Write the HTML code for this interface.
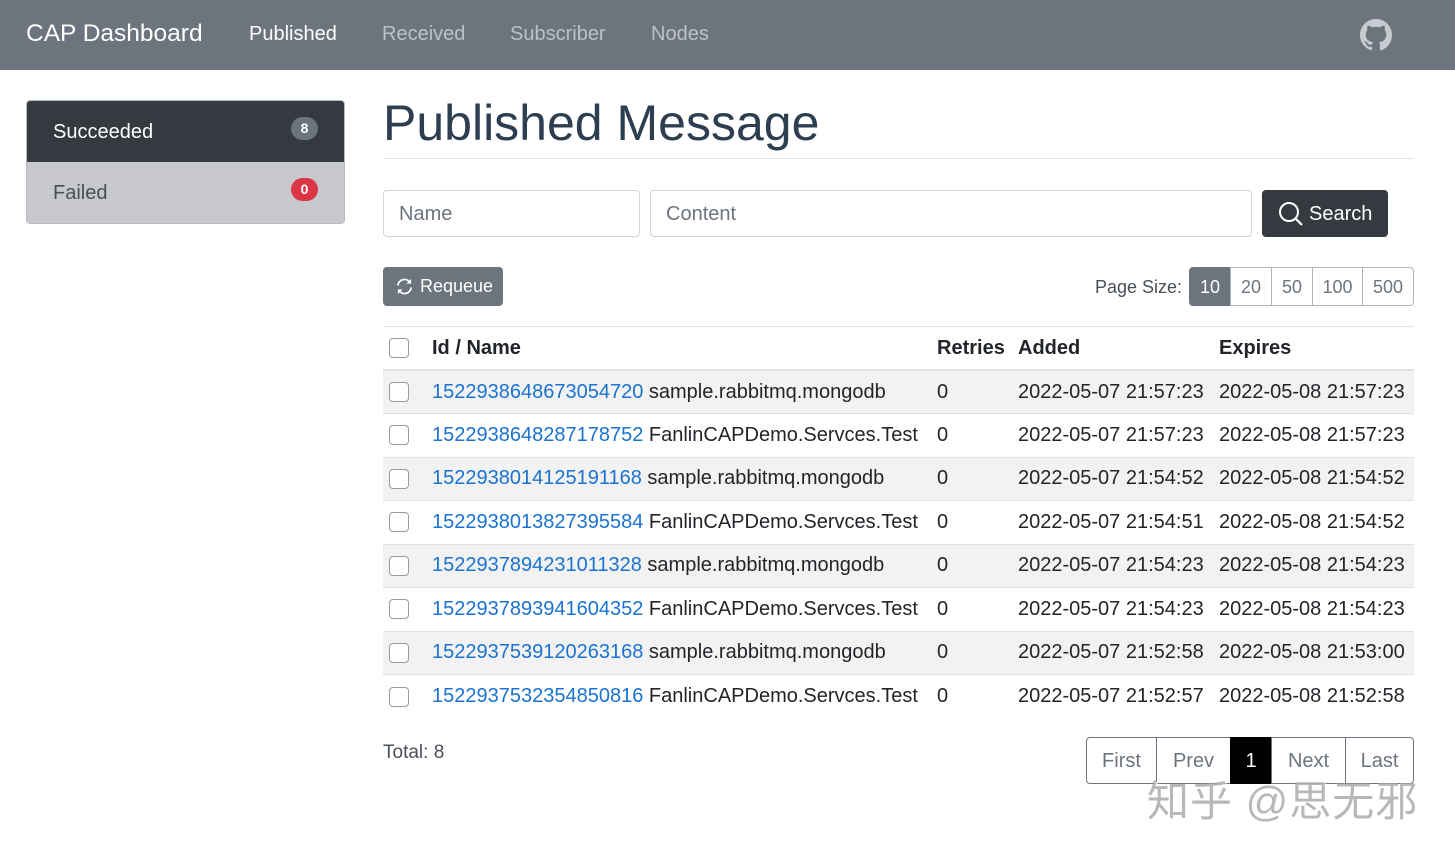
<!DOCTYPE html>
<html><head><meta charset="utf-8"><style>
*{box-sizing:border-box;margin:0;padding:0}
body{width:1455px;height:853px;background:#fff;font-family:"Liberation Sans",Arial,sans-serif;color:#212529;position:relative;overflow:hidden}
.nav{position:absolute;left:0;top:0;width:1455px;height:70px;background:#6c757d}
.nav span{position:absolute;top:23px;font-size:20px;color:rgba(255,255,255,.55)}
.abs{position:absolute}
.side{position:absolute;left:26px;top:100px;width:319px;height:124px;border:1px solid #b8bcc1;border-radius:4px;overflow:hidden}
.side div{height:61px;position:relative;font-size:20px;padding:20px 26px}
.badge{position:absolute;right:26px;top:16px;width:27px;height:23px;border-radius:12px;color:#fff;font-size:14px;font-weight:bold;text-align:center;line-height:23px}
.inp{position:absolute;top:190px;height:47px;border:1px solid #ced4da;border-radius:4px;font-size:20px;color:#6c757d;padding:12px 15px}
table{position:absolute;left:383px;top:326px;width:1031px;border-collapse:collapse;font-size:20px}
td,th{height:43.5px;border-top:1px solid #dee2e6;padding:0;white-space:nowrap;vertical-align:middle}
th{text-align:left;font-weight:bold;border-bottom:2px solid #dee2e6}
tbody tr:nth-child(odd){background:#f2f2f2}
.cb{display:inline-block;width:20px;height:20px;border:1px solid #9a9a9a;border-radius:4px;background:#fff;margin-left:6px;vertical-align:middle}
a{color:#1a73d0;text-decoration:none}
.ps{position:absolute;top:267px;height:39px;border:1px solid #adb5bd;font-size:18px;color:#6c757d;text-align:center;line-height:38px}
.pg{position:absolute;top:737px;height:47px;border:1px solid #6c757d;font-size:20px;color:#6c757d;text-align:center;line-height:46px}
</style></head><body>
<div class="nav">
<span style="left:26px;top:20px;font-size:24.5px;color:#fff">CAP Dashboard</span>
<span style="left:249px;color:#fff">Published</span>
<span style="left:382px">Received</span>
<span style="left:510px">Subscriber</span>
<span style="left:651px">Nodes</span>
<svg class="abs" style="left:1360px;top:19px" width="32" height="32" viewBox="0 0 16 16"><path fill="#c8ccd0" d="M8 0C3.580 0 0 3.58 0 8c0 3.54 2.29 6.530 5.47 7.59.4.07.55-.17.55-.38v-1.33c-2.23.48-2.7-1.07-2.7-1.07-.36-.92-.89-1.170-.89-1.17-.73-.5.06-.49.06-.49.8.06 1.23.83 1.23.83.72 1.22 1.87.87 2.33.67.07-.52.28-.87.5-1.07-1.78-.2-3.64-.89-3.64-3.95 0-.87.31-1.59.82-2.15-.08-.2-.36-1.02.08-2.12 0 0 .67-.21 2.2.82a7.6 7.6 0 014 0c1.53-1.04 2.2-.82 2.2-.82.44 1.1.16 1.92.08 2.12.51.56.82 1.27.82 2.15 0 3.07-1.87 3.75-3.65 3.95.29.25.54.73.54 1.48v2.19c0 .21.15.46.55.38A8 8 0 0016 8c0-4.42-3.58-8-8-8z"/></svg>
</div>
<div class="side">
<div style="background:#343a40;color:#fff">Succeeded<span class="badge" style="background:#6c757d">8</span></div>
<div style="background:#c6c8cc;color:#495057">Failed<span class="badge" style="background:#dc3545">0</span></div>
</div>
<div class="abs" style="left:383px;top:94px;font-size:50px;color:#2c3e50">Published Message</div>
<div class="abs" style="left:383px;top:158px;width:1031px;height:1px;background:#e5e5e5"></div>
<div class="inp" style="left:383px;width:257px">Name</div>
<div class="inp" style="left:650px;width:602px">Content</div>
<div class="abs" style="left:1262px;top:190px;width:126px;height:47px;background:#343a40;border-radius:4px;color:#fff;font-size:20px;line-height:49px;padding-left:47px">Search
<svg class="abs" style="left:16px;top:11px" width="26" height="26" viewBox="0 0 26 26"><circle cx="11" cy="11" r="9" fill="none" stroke="#fff" stroke-width="2"/><path d="M17.5 17.5L24 24" stroke="#fff" stroke-width="2.2"/></svg></div>
<div class="abs" style="left:383px;top:267px;width:120px;height:39px;background:#6c757d;border-radius:4px;color:#fff;font-size:18px;line-height:39px;padding-left:37px">Requeue
<svg class="abs" style="left:12px;top:10px" width="19" height="19" viewBox="0 0 20 20"><path d="M3 9A7 7 0 0 1 16 6M17 11A7 7 0 0 1 4 14" fill="none" stroke="#fff" stroke-width="1.8"/><path d="M17 2v5h-5z M3 18v-5h5z" fill="#fff"/></svg></div>
<div class="abs" style="left:1095px;top:277px;font-size:18px;color:#495057">Page Size:</div>
<div class="ps" style="left:1189px;width:42px;background:#6c757d;color:#fff;border-color:#6c757d;border-radius:4px 0 0 4px">10</div>
<div class="ps" style="left:1230px;width:42px">20</div>
<div class="ps" style="left:1271px;width:42px">50</div>
<div class="ps" style="left:1312px;width:51px">100</div>
<div class="ps" style="left:1362px;width:52px;border-radius:0 4px 4px 0">500</div>
<table>
<colgroup><col style="width:49px"><col style="width:505px"><col style="width:81px"><col style="width:201px"><col></colgroup>
<thead><tr><th><span class="cb"></span></th><th>Id / Name</th><th>Retries</th><th>Added</th><th>Expires</th></tr></thead>
<tbody>
<tr><td><span class="cb"></span></td><td><a>1522938648673054720</a> sample.rabbitmq.mongodb</td><td>0</td><td>2022-05-07 21:57:23</td><td>2022-05-08 21:57:23</td></tr>
<tr><td><span class="cb"></span></td><td><a>1522938648287178752</a> FanlinCAPDemo.Servces.Test</td><td>0</td><td>2022-05-07 21:57:23</td><td>2022-05-08 21:57:23</td></tr>
<tr><td><span class="cb"></span></td><td><a>1522938014125191168</a> sample.rabbitmq.mongodb</td><td>0</td><td>2022-05-07 21:54:52</td><td>2022-05-08 21:54:52</td></tr>
<tr><td><span class="cb"></span></td><td><a>1522938013827395584</a> FanlinCAPDemo.Servces.Test</td><td>0</td><td>2022-05-07 21:54:51</td><td>2022-05-08 21:54:52</td></tr>
<tr><td><span class="cb"></span></td><td><a>1522937894231011328</a> sample.rabbitmq.mongodb</td><td>0</td><td>2022-05-07 21:54:23</td><td>2022-05-08 21:54:23</td></tr>
<tr><td><span class="cb"></span></td><td><a>1522937893941604352</a> FanlinCAPDemo.Servces.Test</td><td>0</td><td>2022-05-07 21:54:23</td><td>2022-05-08 21:54:23</td></tr>
<tr><td><span class="cb"></span></td><td><a>1522937539120263168</a> sample.rabbitmq.mongodb</td><td>0</td><td>2022-05-07 21:52:58</td><td>2022-05-08 21:53:00</td></tr>
<tr><td><span class="cb"></span></td><td><a>1522937532354850816</a> FanlinCAPDemo.Servces.Test</td><td>0</td><td>2022-05-07 21:52:57</td><td>2022-05-08 21:52:58</td></tr>
</tbody></table>
<div class="abs" style="left:383px;top:742px;font-size:19px;color:#495057">Total: 8</div>
<div class="pg" style="left:1086px;width:71px;border-radius:4px 0 0 4px">First</div>
<div class="pg" style="left:1156px;width:75px">Prev</div>
<div class="pg" style="left:1230px;width:42px;background:#000;color:#fff;border-color:#000">1</div>
<div class="pg" style="left:1271px;width:75px">Next</div>
<div class="pg" style="left:1345px;width:69px;border-radius:0 4px 4px 0">Last</div>
<div class="abs" style="left:1147px;top:768px;font-size:42px;letter-spacing:1px;color:rgba(160,160,160,.75);font-family:'Liberation Sans','Noto Sans CJK SC',sans-serif;text-shadow:1px 1px 1px #fff">知乎 @思无邪</div>
</body></html>
